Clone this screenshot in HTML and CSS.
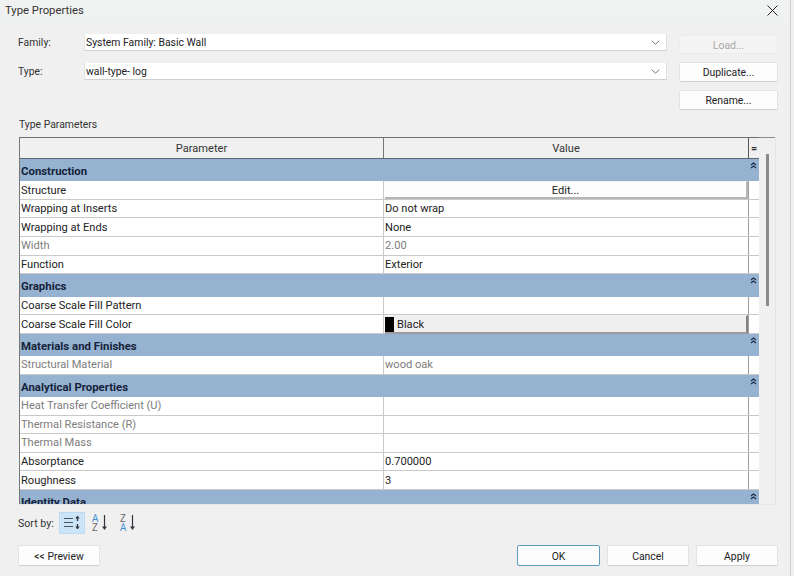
FILE: index.html
```html
<!DOCTYPE html>
<html lang="en">
<head>
<meta charset="utf-8">
<title>Type Properties</title>
<link rel="stylesheet" href="styles.css">
</head>
<body>
<svg class="defs" width="0" height="0" aria-hidden="true">
  <symbol id="collapse" viewBox="0 0 7 7"><path d="M1 3 3.5 1 6 3M1 6l2.5-2L6 6" fill="none" stroke="#1d2b45" stroke-width="1.2"/></symbol>
  <symbol id="chev" viewBox="0 0 9 5"><path d="M.7.7 4.5 4.2 8.3.7" fill="none" stroke="#777" stroke-width="1"/></symbol>
</svg>
<div class="dialog">
  <header class="titlebar">
    <span class="title">Type Properties</span>
    <svg class="close" width="11" height="11" viewBox="0 0 11 11"><path d="M.5.5l10 10M10.5.5l-10 10" stroke="#222" stroke-width="1" fill="none"/></svg>
  </header>
  <section class="top">
    <div class="fields">
      <div class="field"><label class="field-label">Family:</label><div class="combo"><span>System Family: Basic Wall</span><svg class="chev"><use href="#chev"/></svg></div></div>
      <div class="field"><label class="field-label">Type:</label><div class="combo"><span>wall-type- log</span><svg class="chev"><use href="#chev"/></svg></div></div>
    </div>
    <div class="side">
      <button class="btn disabled load">Load...</button>
      <button class="btn side-btn">Duplicate...</button>
      <button class="btn side-btn">Rename...</button>
    </div>
  </section>
  <div class="section-label">Type Parameters</div>
  <div class="panel">
    <div class="table">
      <div class="thead"><div class="th">Parameter</div><div class="th">Value</div><div class="th eq">=</div></div>
      <div class="band"><span>Construction</span><svg class="col"><use href="#collapse"/></svg></div>
      <div class="row"><div class="p">Structure</div><div class="v btncell"><div class="cellbtn center">Edit...</div></div><div class="m"></div></div>
      <div class="row"><div class="p">Wrapping at Inserts</div><div class="v">Do not wrap</div><div class="m"></div></div>
      <div class="row"><div class="p">Wrapping at Ends</div><div class="v">None</div><div class="m"></div></div>
      <div class="row dim"><div class="p">Width</div><div class="v">2.00</div><div class="m"></div></div>
      <div class="row"><div class="p">Function</div><div class="v">Exterior</div><div class="m"></div></div>
      <div class="band"><span>Graphics</span><svg class="col"><use href="#collapse"/></svg></div>
      <div class="row"><div class="p">Coarse Scale Fill Pattern</div><div class="v"></div><div class="m"></div></div>
      <div class="row"><div class="p">Coarse Scale Fill Color</div><div class="v btncell"><div class="cellbtn grey"><i class="swatch"></i>Black</div></div><div class="m"></div></div>
      <div class="band"><span>Materials and Finishes</span><svg class="col"><use href="#collapse"/></svg></div>
      <div class="row dim"><div class="p">Structural Material</div><div class="v">wood oak</div><div class="m"></div></div>
      <div class="band"><span>Analytical Properties</span><svg class="col"><use href="#collapse"/></svg></div>
      <div class="row dim"><div class="p">Heat Transfer Coefficient (U)</div><div class="v"></div><div class="m"></div></div>
      <div class="row dim"><div class="p">Thermal Resistance (R)</div><div class="v"></div><div class="m"></div></div>
      <div class="row dim"><div class="p">Thermal Mass</div><div class="v"></div><div class="m"></div></div>
      <div class="row"><div class="p">Absorptance</div><div class="v">0.700000</div><div class="m"></div></div>
      <div class="row"><div class="p">Roughness</div><div class="v">3</div><div class="m"></div></div>
      <div class="band last"><span>Identity Data</span><svg class="col"><use href="#collapse"/></svg></div>
    </div>
    <div class="scroll"><div class="thumb"></div></div>
  </div>
  <div class="sort">
    <span class="sort-label">Sort by:</span>
    <div class="sort-btn on">
      <svg width="18" height="16" viewBox="0 0 18 16"><path d="M1 3.5h9M1 7.5h9M1 11.5h9" stroke="#4a5560" stroke-width="1.2" fill="none"/><path d="M14.5 1v5M14.5 9v5" stroke="#30363c" stroke-width="1.3"/><path d="M12.3 3.6 14.5.8l2.2 2.8zM12.3 11.4l2.2 2.8 2.2-2.8z" fill="#30363c"/></svg>
    </div>
    <div class="sort-btn">
      <svg width="20" height="22" viewBox="0 0 20 22"><text class="az" x="2" y="10" fill="#3d8fd0">A</text><text class="az" x="2" y="18.5" fill="#666">Z</text><path d="M14.5 3v12" stroke="#30363c" stroke-width="1.2"/><path d="M12 14.5l2.5 3.5 2.5-3.5z" fill="#30363c"/></svg>
    </div>
    <div class="sort-btn">
      <svg width="20" height="22" viewBox="0 0 20 22"><text class="az" x="2" y="10" fill="#666">Z</text><text class="az" x="2" y="18.5" fill="#3d8fd0">A</text><path d="M14.5 3v12" stroke="#30363c" stroke-width="1.2"/><path d="M12 14.5l2.5 3.5 2.5-3.5z" fill="#30363c"/></svg>
    </div>
  </div>
  <footer class="footer">
    <button class="btn preview">&lt;&lt; Preview</button>
    <div class="actions">
      <button class="btn act ok">OK</button>
      <button class="btn act">Cancel</button>
      <button class="btn act">Apply</button>
    </div>
  </footer>
</div>
</body>
</html>
```
FILE: styles.css
```css
* { box-sizing: border-box; }
html, body { margin: 0; height: 576px; overflow: hidden; }
body {
  background: #f0f0f0;
  font-family: Roboto, "Open Sans", sans-serif;
  font-size: 10.4px;
  color: #222;
}
.defs { display: block; height: 0; }
.dialog {
  width: 791px;
  height: 576px;
  background: #f0f0f0;
  border-right: 1px solid #cfcfcf;
  display: flex;
  flex-direction: column;
}
.titlebar {
  height: 23px;
  background: #f0f2f2;
  display: flex;
  align-items: center;
  justify-content: space-between;
  padding: 0 12px 3px 5px;
}
.title { font-size: 11.3px; color: #333; }
.top {
  display: flex;
  height: 88px;
  padding: 11px 12px 0 18px;
  justify-content: space-between;
}
.field { display: flex; align-items: center; height: 17px; margin-bottom: 12px; }
.field-label { width: 66px; color: #333; }
.combo {
  width: 583px;
  height: 17px;
  background: #fff;
  border-bottom: 1px solid #d0d0d0;
  border-right: 1px solid #e0e0e0;
  border-left: 1px solid #e4e4e4;
  display: flex;
  align-items: center;
  justify-content: space-between;
  padding: 0 6px 0 1px;
}
.chev { width: 9px; height: 5px; }
.side { display: flex; flex-direction: column; width: 99px; }
.btn {
  font: inherit;
  color: #222;
  background: #fdfdfd;
  border: 1px solid #e2e2e2;
  border-bottom-color: #cfcfcf;
  border-radius: 2px;
  padding: 1px 0 0;
}
.load { height: 19px; margin-top: 1px; background: #f4f4f4; color: #a8a8a8; border-color: #ececec; }
.side-btn { height: 20px; margin-top: 8px; }
.section-label { height: 26px; padding: 7px 0 0 19px; color: #333; }
.panel {
  display: flex;
  height: 368px;
  margin-right: 14px;
  border-right: 1px solid #e6e6e6;
  border-bottom: 1px solid #e6e6e6;
  margin-left: 19px;
}
.table { width: 741px; height: 367px; overflow: hidden; border-left: 1px solid #777; font-size: 11.1px; }
.thead {
  display: grid;
  grid-template-columns: 364px 365px 11px;
  height: 22px;
  background: #f0f0f0;
  border-top: 1px solid #6e6e6e;
  border-bottom: 1px solid #5d6672;
}
.th { display: flex; align-items: center; justify-content: center; border-right: 1px solid #555; color: #333; }
.th:first-child { border-right-color: #777; }
.eq { font-size: 11px; font-weight: 500; }
.band {
  height: 22.3px;
  background: #95b2d1;
  font-weight: 700;
  color: #16233a;
  font-size: 11.4px;
  display: flex;
  align-items: center;
  justify-content: space-between;
  padding: 2px 2px 0 1px;
}
.col { width: 7px; height: 7px; align-self: flex-start; margin-top: 1px; }
.row {
  display: grid;
  grid-template-columns: 364px 365px 11px;
  height: 18.6px;
  background: #fff;
  border-bottom: 1px solid #c9c9c9;
}
.p, .v { display: flex; align-items: center; padding: 0 0 0 1px; white-space: nowrap; }
.p { border-right: 1px solid #c9c9c9; }
.v { border-right: 1px solid #9f9f9f; }
.dim { color: #7d7d7d; }
.btncell { padding: 0 0 0 1px; align-items: stretch; }
.cellbtn {
  flex: 1;
  display: flex;
  align-items: center;
  background: #fdfdfd;
  border-right: 2px solid #b5b5b5;
  border-bottom: 2px solid #b5b5b5;
  border-top: 1px solid #f2f2f2;
  padding-top: 1px;
}
.center { justify-content: center; }
.grey { background: #efeff0; border-right-color: #838383; border-bottom-color: #9c9c9c; }
.swatch { display: block; width: 9px; height: 15px; background: #000; margin-right: 3px; }
.scroll { width: 16px; padding: 16px 0 0 7px; border-top: 1px solid #8a8a8a; }
.thumb { width: 3px; height: 152px; background: #8a8a8a; }
.sort { height: 40px; display: flex; align-items: center; padding: 0 0 4px 18px; }
.sort-label { width: 41px; color: #333; font-size: 10.6px; }
.sort-btn {
  width: 26px;
  height: 22px;
  display: flex;
  align-items: center;
  justify-content: center;
  margin-right: 2px;
  border: 1px solid transparent;
}
.on { background: #cce4f7; border-color: #bcdcf4; }
.az { font-size: 10px; font-family: "Open Sans", sans-serif; }
.footer { display: flex; justify-content: space-between; padding: 0 12px 0 18px; }
.preview { width: 82px; height: 21px; }
.actions { display: flex; }
.act { width: 82px; height: 21px; margin-left: 7px; }
.ok { border: 1px solid #5f9dbd; border-bottom-color: #5f9dbd; width: 83px; }
```
